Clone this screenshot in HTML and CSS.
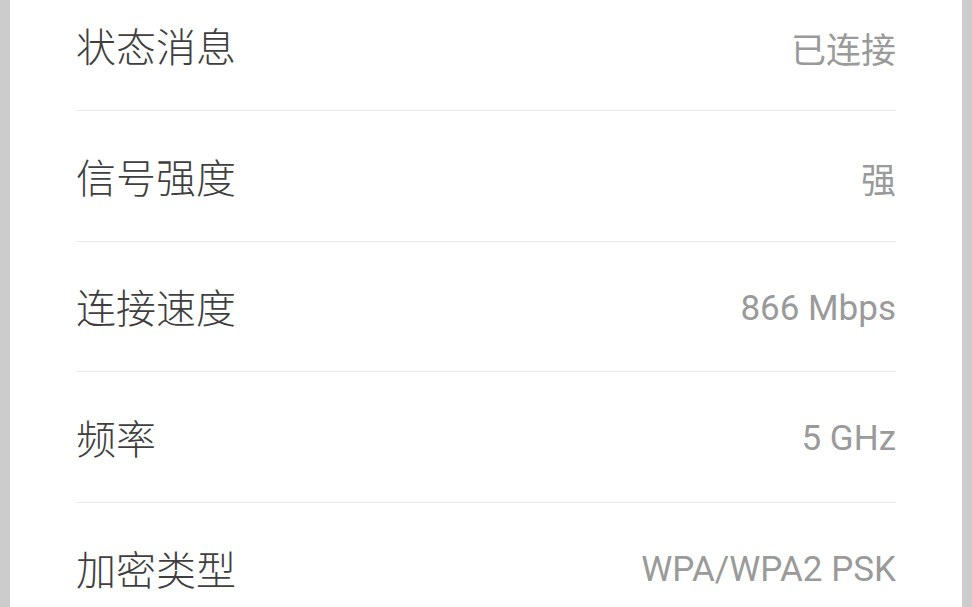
FILE: index.html
```html
<!DOCTYPE html>
<html lang="zh">
<head>
<meta charset="utf-8">
<link rel="stylesheet" href="styles.css">
</head>
<body>
<div class="page">
  <div class="list">
    <div class="row"><span class="label">状态消息</span><span class="value">已连接</span></div>
    <div class="row"><span class="label">信号强度</span><span class="value">强</span></div>
    <div class="row"><span class="label">连接速度</span><span class="value">866 Mbps</span></div>
    <div class="row"><span class="label">频率</span><span class="value">5 GHz</span></div>
    <div class="row last"><span class="label">加密类型</span><span class="value">WPA/WPA2 PSK</span></div>
  </div>
</div>
</body>
</html>
```
FILE: styles.css
```css
html, body {
  margin: 0;
  padding: 0;
  height: 100%;
  overflow: hidden;
  background: #cccccc;
}
.page {
  margin: 0 10px;
  height: 607px;
  background: #ffffff;
  overflow: hidden;
}
.list {
  margin-top: -19.5px;
  padding: 0 66px;
}
.row {
  height: 130.5px;
  box-sizing: border-box;
  display: flex;
  align-items: center;
  justify-content: space-between;
  border-bottom: 1.5px solid #e9e9e9;
}
.row.last {
  border-bottom: none;
}
.label {
  font-family: "Noto Sans CJK SC", sans-serif;
  font-size: 40px;
  font-weight: 300;
  color: #3f3f3f;
}
.value {
  font-family: Roboto, "Noto Sans CJK SC", sans-serif;
  font-size: 35px;
  font-weight: 400;
  color: #9a9a9a;
  padding-top: 4px;
}
```
